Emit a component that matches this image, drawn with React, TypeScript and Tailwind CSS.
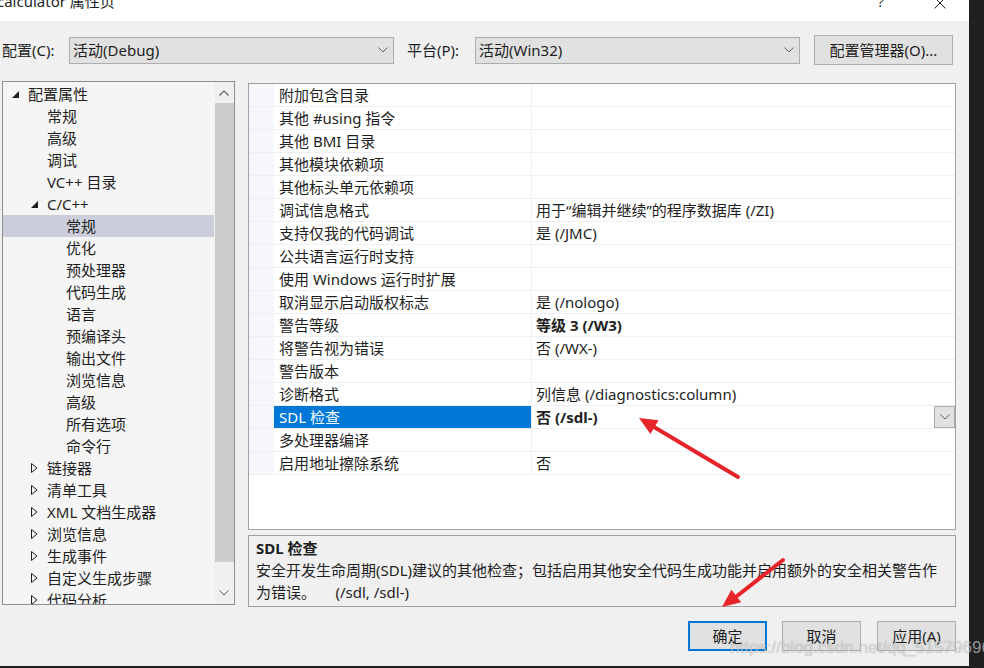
import React from 'react'

const FONT = "font-['Noto_Sans','Noto_Sans_CJK_SC',sans-serif]"

type TreeItem = { label: string; level: 0 | 1 | 2; arrow?: 'open' | 'closed'; selected?: boolean }

const TREE: TreeItem[] = [
  { label: '配置属性', level: 0, arrow: 'open' },
  { label: '常规', level: 1 },
  { label: '高级', level: 1 },
  { label: '调试', level: 1 },
  { label: 'VC++ 目录', level: 1 },
  { label: 'C/C++', level: 1, arrow: 'open' },
  { label: '常规', level: 2, selected: true },
  { label: '优化', level: 2 },
  { label: '预处理器', level: 2 },
  { label: '代码生成', level: 2 },
  { label: '语言', level: 2 },
  { label: '预编译头', level: 2 },
  { label: '输出文件', level: 2 },
  { label: '浏览信息', level: 2 },
  { label: '高级', level: 2 },
  { label: '所有选项', level: 2 },
  { label: '命令行', level: 2 },
  { label: '链接器', level: 1, arrow: 'closed' },
  { label: '清单工具', level: 1, arrow: 'closed' },
  { label: 'XML 文档生成器', level: 1, arrow: 'closed' },
  { label: '浏览信息', level: 1, arrow: 'closed' },
  { label: '生成事件', level: 1, arrow: 'closed' },
  { label: '自定义生成步骤', level: 1, arrow: 'closed' },
  { label: '代码分析', level: 1, arrow: 'closed' },
]

const INDENT = ['pl-[6px]', 'pl-[25px]', 'pl-[44px]']

type Prop = { name: string; value?: string; bold?: boolean; selected?: boolean }

const PROPS: Prop[] = [
  { name: '附加包含目录' },
  { name: '其他 #using 指令' },
  { name: '其他 BMI 目录' },
  { name: '其他模块依赖项' },
  { name: '其他标头单元依赖项' },
  { name: '调试信息格式', value: '用于“编辑并继续”的程序数据库 (/ZI)' },
  { name: '支持仅我的代码调试', value: '是 (/JMC)' },
  { name: '公共语言运行时支持' },
  { name: '使用 Windows 运行时扩展' },
  { name: '取消显示启动版权标志', value: '是 (/nologo)' },
  { name: '警告等级', value: '等级 3 (/W3)', bold: true },
  { name: '将警告视为错误', value: '否 (/WX-)' },
  { name: '警告版本' },
  { name: '诊断格式', value: '列信息 (/diagnostics:column)' },
  { name: 'SDL 检查', value: '否 (/sdl-)', bold: true, selected: true },
  { name: '多处理器编译' },
  { name: '启用地址擦除系统', value: '否' },
]

function Chevron({ className = '' }: { className?: string }) {
  return (
    <svg width="10" height="6" viewBox="0 0 10 6" className={className}>
      <path d="M0.5 0.5 L5 5 L9.5 0.5" fill="none" stroke="#606060" strokeWidth="1" />
    </svg>
  )
}

function Combo({ text }: { text: string }) {
  return (
    <div className="w-[325px] h-[27px] bg-[#e1e1e1] border border-[#adadad] flex items-center justify-between pl-[3px] pr-[5px]">
      <span>{text}</span>
      <Chevron />
    </div>
  )
}

function Tree() {
  return (
    <div className="w-[233px] h-[524px] border border-[#8e8f94] bg-[#f5f5f5] flex overflow-hidden">
      <div className="flex-1 pt-[1px] overflow-hidden">
        {TREE.map((item, i) => (
          <div
            key={i}
            className={`h-[22px] flex items-center ${INDENT[item.level]} ${item.selected ? 'bg-[#cccedb]' : ''}`}
          >
            <div className="w-[19px] pl-[3px] flex items-center">
              {item.arrow === 'open' && (
                <svg width="7" height="7" viewBox="0 0 7 7">
                  <path d="M7 0 L7 7 L0 7 Z" fill="#1e1e1e" />
                </svg>
              )}
              {item.arrow === 'closed' && (
                <svg width="7" height="10" viewBox="0 0 7 10">
                  <path d="M0.5 0.5 L6 5 L0.5 9.5 Z" fill="none" stroke="#1e1e1e" strokeWidth="1" />
                </svg>
              )}
            </div>
            <span className="whitespace-nowrap">{item.label}</span>
          </div>
        ))}
      </div>
      <div className="w-[20px] bg-[#f0f0f0] flex flex-col items-center">
        <div className="h-[21px] flex items-center">
          <svg width="10" height="6" viewBox="0 0 10 6">
            <path d="M0.5 5.5 L5 1 L9.5 5.5" fill="none" stroke="#606060" strokeWidth="1.2" />
          </svg>
        </div>
        <div className="w-[19px] h-[459px] bg-[#cdcdcd]" />
        <div className="flex-1 flex items-end pb-[8px]">
          <Chevron />
        </div>
      </div>
    </div>
  )
}

function Grid() {
  return (
    <div className="h-[447px] border border-[#a0a0a0] bg-white">
      {PROPS.map((p, i) => (
        <div key={i} className="h-[23px] flex border-b border-[#eef0f4]">
          <div className="w-[25px] bg-[#f5f7fa]" />
          <div
            className={`w-[258px] pl-[5px] flex items-center whitespace-nowrap border-r border-[#eef0f4] ${
              p.selected ? 'bg-[#0078d7] text-white' : 'text-[#1e1e1e]'
            }`}
          >
            {p.name}
          </div>
          <div className={`flex-1 pl-[4px] flex items-center justify-between whitespace-nowrap text-[#1e1e1e] ${p.bold ? 'font-bold' : ''}`}>
            <span>{p.value}</span>
            {p.selected && (
              <div className="w-[21px] h-[22px] bg-[#e1e1e1] border border-[#adadad] flex items-center justify-center">
                <Chevron />
              </div>
            )}
          </div>
        </div>
      ))}
    </div>
  )
}

export default function App() {
  return (
    <div className={`relative w-[984px] h-[668px] bg-[#1f1f1f] flex text-[15px] leading-[22px] text-[#1e1e1e] ${FONT}`}>
      <div className="w-[969px] h-[666px] bg-[#f0f0f0] flex flex-col">
        {/* title bar */}
        <div className="h-[21px] bg-white flex items-start overflow-hidden">
          <span className="ml-[-3px] mt-[-9px] leading-[20px] whitespace-nowrap">calculator 属性页</span>
          <span className="ml-auto mt-[-9px] leading-[20px] text-[#444]">?</span>
          <svg width="12" height="12" viewBox="0 0 12 12" className="ml-[50px] mr-[23px] mt-[-3px]">
            <path d="M0.5 0.5 L11.5 11.5 M11.5 0.5 L0.5 11.5" stroke="#222" strokeWidth="1" />
          </svg>
        </div>

        {/* config row */}
        <div className="mt-[14px] h-[30px] flex items-center">
          <span className="w-[69px] pl-[2px] whitespace-nowrap">配置(C):</span>
          <Combo text="活动(Debug)" />
          <span className="w-[81px] pl-[13px] whitespace-nowrap">平台(P):</span>
          <Combo text="活动(Win32)" />
          <div className="ml-[14px] w-[139px] h-[30px] bg-[#e1e1e1] border border-[#adadad] flex items-center justify-center whitespace-nowrap">
            配置管理器(O)...
          </div>
        </div>

        {/* main area */}
        <div className="mt-[16px] flex pl-[2px]">
          <Tree />
          <div className="ml-[13px] w-[708px] flex flex-col">
            <div className="mt-[2px]">
              <Grid />
            </div>
            <div className="mt-[5px] h-[72px] border border-[#a0a0a0] bg-[#f0f0f0] pl-[7px] pt-[1px]">
              <div className="font-bold">SDL 检查</div>
              <div>安全开发生命周期(SDL)建议的其他检查；包括启用其他安全代码生成功能并启用额外的安全相关警告作</div>
              <div className="whitespace-pre">为错误。     (/sdl, /sdl-)</div>
            </div>
          </div>
        </div>

        {/* buttons */}
        <div className="mt-[14px] flex justify-end pr-[13px]">
          <div className="w-[79px] h-[30px] border-2 border-[#0078d7] bg-[#e1e1e1] flex items-center justify-center">确定</div>
          <div className="ml-[15px] w-[79px] h-[30px] border border-[#adadad] bg-[#e1e1e1] flex items-center justify-center">取消</div>
          <div className="ml-[16px] w-[79px] h-[30px] border border-[#adadad] bg-[#e1e1e1] flex items-center justify-center">应用(A)</div>
        </div>
      </div>

      {/* annotations */}
      <svg className="absolute left-0 top-0 pointer-events-none" width="984" height="668" viewBox="0 0 984 668">
        <line x1="738" y1="477" x2="654" y2="427" stroke="#e8242b" strokeWidth="4" strokeLinecap="round" />
        <path d="M639 418 L658.6 420.3 L650.4 434.1 Z" fill="#e8242b" />
        <line x1="783" y1="560" x2="737" y2="596" stroke="#e8242b" strokeWidth="4" strokeLinecap="round" />
        <path d="M722 607 L731.4 589.7 L741.2 602.3 Z" fill="#e8242b" />
      </svg>
      <div className="absolute left-[730px] top-[637px] text-[17px] leading-[22px] font-['Liberation_Sans',sans-serif] text-[rgba(255,255,255,0.55)] [text-shadow:0_0_1px_rgba(0,0,0,0.35)] pointer-events-none whitespace-nowrap">
        https://blog.csdn.net/qq_51579696
      </div>
    </div>
  )
}
